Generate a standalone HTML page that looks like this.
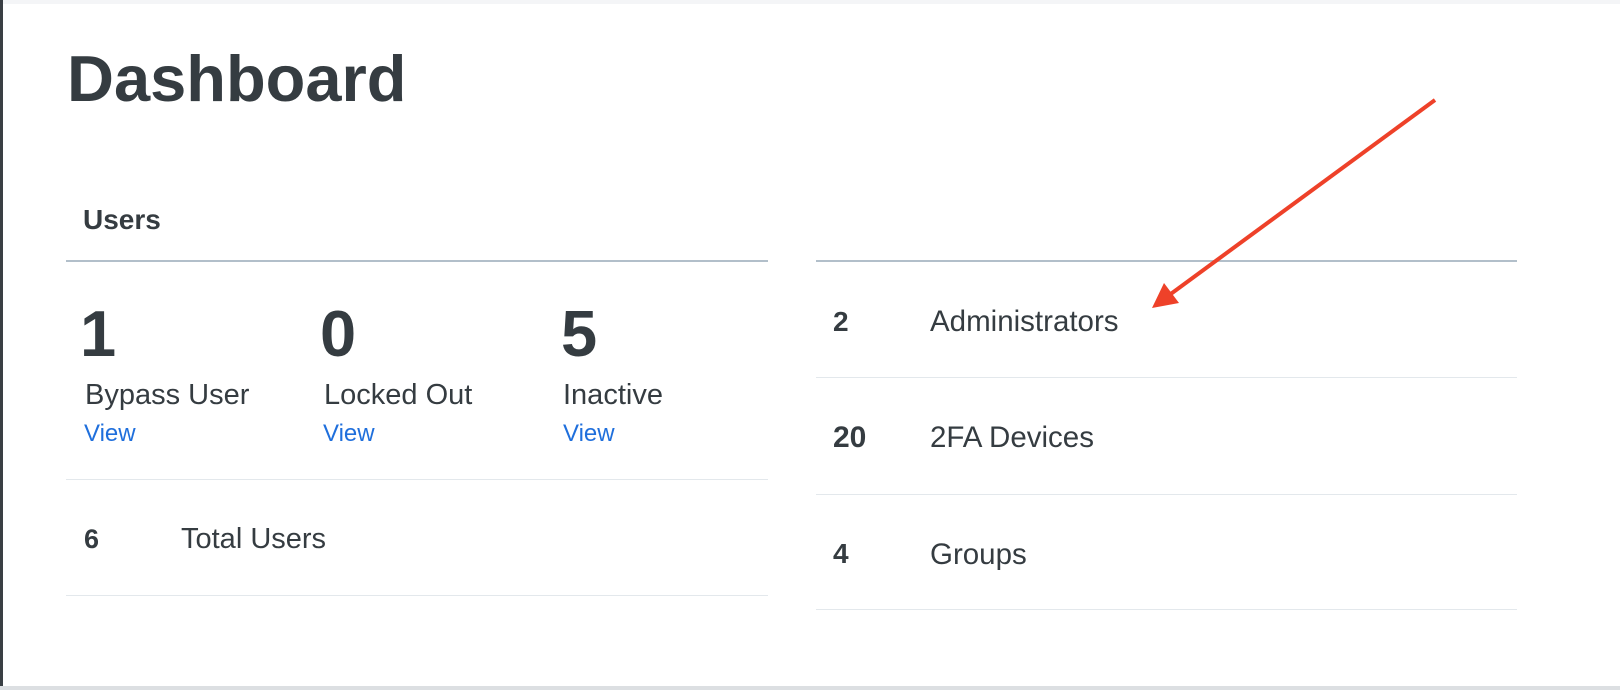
<!DOCTYPE html>
<html><head><meta charset="utf-8"><style>
html,body{margin:0;padding:0;}
body{width:1620px;height:690px;position:relative;background:#fff;overflow:hidden;font-family:"Liberation Sans",Arial,sans-serif;color:#353c41;}
.t{position:absolute;line-height:1;white-space:nowrap;}
.b{font-weight:bold;}
.h{position:absolute;height:1px;background:#e3e8ec;}
.hd{position:absolute;height:2px;background:#b2bfca;}
.v{color:#1f6fdc;}
</style></head><body>
<div style="position:absolute;left:0;top:0;width:1620px;height:4px;background:#f4f5f7"></div>
<div style="position:absolute;left:0;top:0;width:3px;height:690px;background:#3a3f44"></div>
<div style="position:absolute;left:0;top:686px;width:1620px;height:4px;background:#dcdfe2"></div>

<div class="t b" style="left:67px;top:46px;font-size:65px;">Dashboard</div>
<div class="t b" style="left:83px;top:206px;font-size:28px;">Users</div>

<div class="hd" style="left:66px;top:260px;width:702px"></div>
<div class="hd" style="left:816px;top:260px;width:701px"></div>

<div class="t b" style="left:80px;top:301px;font-size:65px;">1</div>
<div class="t b" style="left:320px;top:301px;font-size:65px;">0</div>
<div class="t b" style="left:561px;top:301px;font-size:65px;">5</div>

<div class="t" style="left:85px;top:381px;font-size:29px;">Bypass User</div>
<div class="t" style="left:324px;top:381px;font-size:29px;">Locked Out</div>
<div class="t" style="left:563px;top:381px;font-size:29px;">Inactive</div>

<div class="t v" style="left:84px;top:422px;font-size:24px;">View</div>
<div class="t v" style="left:323px;top:422px;font-size:24px;">View</div>
<div class="t v" style="left:563px;top:422px;font-size:24px;">View</div>

<div class="h" style="left:66px;top:479px;width:702px"></div>
<div class="t b" style="left:84px;top:526px;font-size:27px;">6</div>
<div class="t" style="left:181px;top:525px;font-size:29px;">Total Users</div>
<div class="h" style="left:66px;top:595px;width:702px"></div>

<div class="t b" style="left:833px;top:308px;font-size:28px;">2</div>
<div class="t" style="left:930px;top:307px;font-size:29.5px;">Administrators</div>
<div class="h" style="left:816px;top:377px;width:701px"></div>
<div class="t b" style="left:833px;top:423px;font-size:30px;">20</div>
<div class="t" style="left:930px;top:423px;font-size:29.5px;">2FA Devices</div>
<div class="h" style="left:816px;top:494px;width:701px"></div>
<div class="t b" style="left:833px;top:540px;font-size:28px;">4</div>
<div class="t" style="left:930px;top:540px;font-size:29.5px;">Groups</div>
<div class="h" style="left:816px;top:609px;width:701px"></div>

<svg style="position:absolute;left:0;top:0" width="1620" height="690">
<line x1="1435" y1="100" x2="1168" y2="296" stroke="#ee4129" stroke-width="4"/>
<polygon points="1152,308 1164,283 1179,303" fill="#ee4129"/>
</svg>
</body></html>
